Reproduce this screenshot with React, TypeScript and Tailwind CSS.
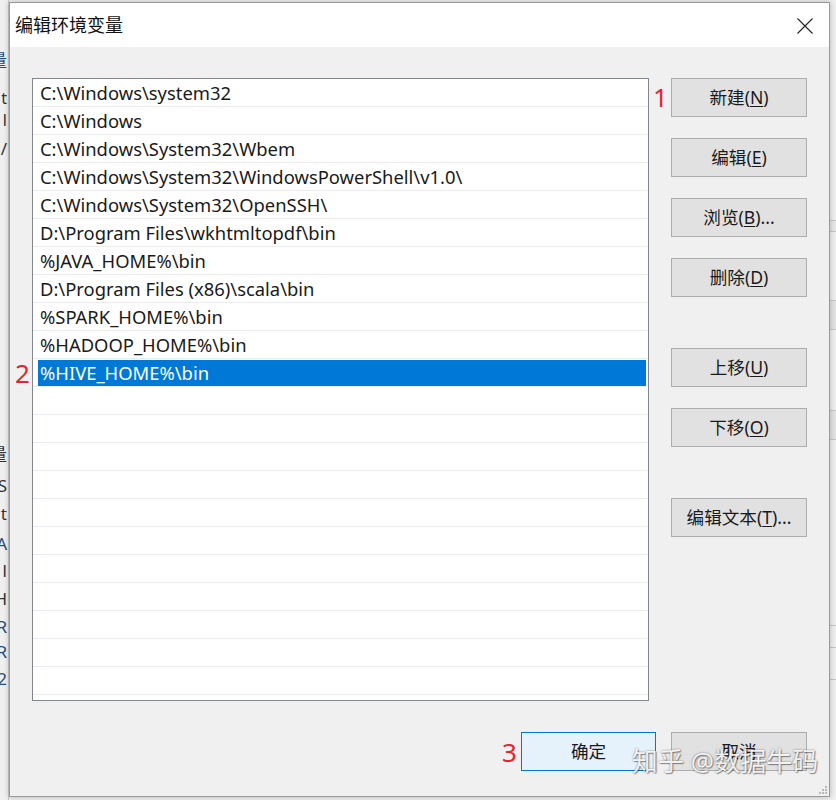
const ROWS = [
  'C:\\Windows\\system32',
  'C:\\Windows',
  'C:\\Windows\\System32\\Wbem',
  'C:\\Windows\\System32\\WindowsPowerShell\\v1.0\\',
  'C:\\Windows\\System32\\OpenSSH\\',
  'D:\\Program Files\\wkhtmltopdf\\bin',
  '%JAVA_HOME%\\bin',
  'D:\\Program Files (x86)\\scala\\bin',
  '%SPARK_HOME%\\bin',
  '%HADOOP_HOME%\\bin',
  '%HIVE_HOME%\\bin',
]
const SELECTED = 10
const TOTAL_ROWS = 23

const FONT = "font-['Noto_Sans','Noto_Sans_CJK_SC',sans-serif]"

function Btn({ label, hot, tail = '', className = '' }: { label: string; hot: string; tail?: string; className?: string }) {
  return (
    <div
      className={`h-[39px] w-[136px] flex items-center justify-center text-[17.6px] text-[#1a1a1a] border bg-[#e1e1e1] border-[#adadad] ${className}`}
    >
      {label}(<span className="underline underline-offset-2">{hot}</span>){tail}
    </div>
  )
}

export default function App() {
  return (
    <div className={`w-[836px] h-[800px] bg-[#f0f0f0] flex overflow-hidden ${FONT}`}>
      {/* background window peeking out on the left */}
      <div className="w-[9px] shrink-0 overflow-hidden relative border-r border-[#c8c8c8]">
        <div className="absolute right-[1px] top-[52px] text-[17px] leading-none text-[#2a4a7a]">量</div>
        <div className="absolute right-[1px] top-[90px] text-[16px] leading-none text-[#333]">t</div>
        <div className="absolute right-[1px] top-[112px] text-[16px] leading-none text-[#333]">l</div>
        <div className="absolute right-[1px] top-[140px] text-[17px] leading-none text-[#333]">/</div>
        <div className="absolute right-[1px] top-[446px] text-[17px] leading-none text-[#333]">量</div>
        <div className="absolute right-[1px] top-[477px] text-[17px] leading-none text-[#333]">S</div>
        <div className="absolute right-[1px] top-[505px] text-[17px] leading-none text-[#333]">t</div>
        <div className="absolute right-[1px] top-[535px] text-[17px] leading-none text-[#2a4a7a]">A</div>
        <div className="absolute right-[1px] top-[562px] text-[17px] leading-none text-[#333]">l</div>
        <div className="absolute right-[1px] top-[590px] text-[17px] leading-none text-[#333]">H</div>
        <div className="absolute right-[1px] top-[618px] text-[17px] leading-none text-[#2a4a7a]">R</div>
        <div className="absolute right-[1px] top-[643px] text-[17px] leading-none text-[#2a4a7a]">R</div>
        <div className="absolute right-[1px] top-[670px] text-[17px] leading-none text-[#2a4a7a]">2</div>
      </div>

      {/* dialog */}
      <div className="mt-[2px] w-[821px] h-[795px] shrink-0 border border-[#9a9a9a] bg-[#f0f0f0] flex flex-col shadow-[0_0_6px_rgba(0,0,0,0.25)] relative">
        <div className="h-[44px] bg-white flex items-center justify-between pl-[5px] pr-[16px]">
          <span className="text-[18px] text-[#111]">编辑环境变量</span>
          <svg width="16" height="16" viewBox="0 0 16 16" className="mt-[1px]">
            <path d="M0.5 0.5 L15.5 15.5 M15.5 0.5 L0.5 15.5" stroke="#222" strokeWidth="1.1" fill="none" />
          </svg>
        </div>

        <div className="flex-1 relative pl-[22px] pr-[22px] pt-[31px] flex flex-col">
          <div className="flex">
            <div className="w-[617px] h-[623px] bg-white border border-[#828790] overflow-hidden shrink-0">
              {Array.from({ length: TOTAL_ROWS }).map((_, i) => (
                <div key={i} className="h-[28px] border-b border-[#ececec] flex items-center">
                  <div
                    className={`ml-[5px] mr-[2px] flex-1 h-[26px] flex items-center pl-[2px] text-[18.4px] whitespace-nowrap ${
                      i === SELECTED ? 'bg-[#0078d7] text-white' : 'text-[#1a1a1a]'
                    }`}
                  >
                    {ROWS[i] ?? ''}
                  </div>
                </div>
              ))}
            </div>
            <div className="ml-[22px] flex flex-col">
              <Btn label="新建" hot="N" />
              <Btn label="编辑" hot="E" className="mt-[21px]" />
              <Btn label="浏览" hot="B" tail="..." className="mt-[21px]" />
              <Btn label="删除" hot="D" className="mt-[21px]" />
              <Btn label="上移" hot="U" className="mt-[51px]" />
              <Btn label="下移" hot="O" className="mt-[21px]" />
              <Btn label="编辑文本" hot="T" tail="..." className="mt-[51px]" />
            </div>
          </div>
          <div className="flex justify-end gap-[15px] mt-[31px]">
            <div className="h-[39px] w-[135px] flex items-center justify-center text-[17.6px] text-[#1a1a1a] border bg-[#e5f1fb] border-[#0078d7]">
              确定
            </div>
            <div className="h-[39px] w-[136px] flex items-center justify-center text-[17.6px] text-[#1a1a1a] border bg-[#e1e1e1] border-[#adadad]">
              取消
            </div>
          </div>

          {/* red annotations */}
          <span className="absolute left-[643px] top-[37px] text-[26px] leading-none text-[#e3262b]">1</span>
          <span className="absolute left-[5px] top-[313px] text-[26px] leading-none text-[#e3262b]">2</span>
          <span className="absolute left-[492px] top-[692px] text-[26px] leading-none text-[#e3262b]">3</span>

          {/* watermark */}
          <span className="absolute left-[622px] top-[701px] text-[26px] leading-none text-white/90 whitespace-nowrap [text-shadow:0_0_2px_rgba(0,0,0,0.5),1px_1px_1px_rgba(0,0,0,0.35)]">
            知乎 @数据牛码
          </span>

          {/* resize grip */}
          <svg width="10" height="10" viewBox="0 0 10 10" className="absolute right-[2px] bottom-[2px]">
            {[[8, 0], [8, 3], [8, 6], [5, 3], [5, 6], [2, 6]].map(([x, y], i) => (
              <rect key={i} x={x} y={y + 2} width="2" height="2" fill="#b8b8b8" />
            ))}
          </svg>
        </div>
      </div>

      {/* background window peeking out on the right */}
      <div className="flex-1 flex flex-col">
        <div className="h-[220px]" />
        <div className="h-[12px] border-y border-[#c8c8c8] bg-[#e8e8e8]" />
        <div className="h-[68px]" />
        <div className="h-[30px] border-y border-[#c8c8c8] bg-[#e4e4e4]" />
        <div className="h-[80px]" />
        <div className="h-[30px] border-y border-[#c8c8c8] bg-[#e4e4e4]" />
        <div className="h-[185px]" />
        <div className="h-[23px] border-y border-[#c8c8c8]" />
        <div className="h-[32px] border-b border-[#c8c8c8]" />
      </div>
    </div>
  )
}
